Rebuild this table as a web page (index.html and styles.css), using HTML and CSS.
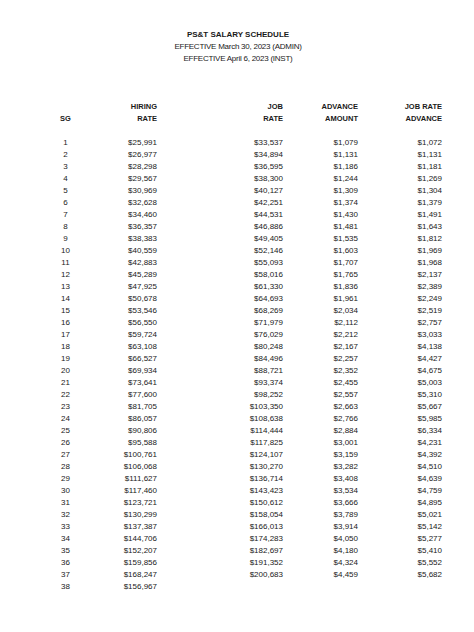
FILE: index.html
```html
<!DOCTYPE html>
<html>
<head>
<meta charset="utf-8">
<link rel="stylesheet" href="styles.css">
</head>
<body>
<div class="page">
  <div class="title">
    <div class="t1">PS&amp;T SALARY SCHEDULE</div>
    <div class="t2">EFFECTIVE March 30, 2023 (ADMIN)</div>
    <div class="t2">EFFECTIVE April 6, 2023 (INST)</div>
  </div>
  <div class="grid head">
    <div class="c1"></div><div class="r">HIRING</div><div class="r">JOB</div><div class="r">ADVANCE</div><div class="r">JOB RATE</div>
    <div class="c1">SG</div><div class="r">RATE</div><div class="r">RATE</div><div class="r">AMOUNT</div><div class="r">ADVANCE</div>
  </div>
  <div class="grid body" id="rows"></div>
</div>
<script>
var d=[
[1,"$25,991","$33,537","$1,079","$1,072"],
[2,"$26,977","$34,894","$1,131","$1,131"],
[3,"$28,298","$36,595","$1,186","$1,181"],
[4,"$29,567","$38,300","$1,244","$1,269"],
[5,"$30,969","$40,127","$1,309","$1,304"],
[6,"$32,628","$42,251","$1,374","$1,379"],
[7,"$34,460","$44,531","$1,430","$1,491"],
[8,"$36,357","$46,886","$1,481","$1,643"],
[9,"$38,383","$49,405","$1,535","$1,812"],
[10,"$40,559","$52,146","$1,603","$1,969"],
[11,"$42,883","$55,093","$1,707","$1,968"],
[12,"$45,289","$58,016","$1,765","$2,137"],
[13,"$47,925","$61,330","$1,836","$2,389"],
[14,"$50,678","$64,693","$1,961","$2,249"],
[15,"$53,546","$68,269","$2,034","$2,519"],
[16,"$56,550","$71,979","$2,112","$2,757"],
[17,"$59,724","$76,029","$2,212","$3,033"],
[18,"$63,108","$80,248","$2,167","$4,138"],
[19,"$66,527","$84,496","$2,257","$4,427"],
[20,"$69,934","$88,721","$2,352","$4,675"],
[21,"$73,641","$93,374","$2,455","$5,003"],
[22,"$77,600","$98,252","$2,557","$5,310"],
[23,"$81,705","$103,350","$2,663","$5,667"],
[24,"$86,057","$108,638","$2,766","$5,985"],
[25,"$90,806","$114,444","$2,884","$6,334"],
[26,"$95,588","$117,825","$3,001","$4,231"],
[27,"$100,761","$124,107","$3,159","$4,392"],
[28,"$106,068","$130,270","$3,282","$4,510"],
[29,"$111,627","$136,714","$3,408","$4,639"],
[30,"$117,460","$143,423","$3,534","$4,759"],
[31,"$123,721","$150,612","$3,666","$4,895"],
[32,"$130,299","$158,054","$3,789","$5,021"],
[33,"$137,387","$166,013","$3,914","$5,142"],
[34,"$144,706","$174,283","$4,050","$5,277"],
[35,"$152,207","$182,697","$4,180","$5,410"],
[36,"$159,856","$191,352","$4,324","$5,552"],
[37,"$168,247","$200,683","$4,459","$5,682"],
[38,"$156,967","","",""]
];
var h="";
d.forEach(function(r){
  h+='<div class="c1">'+r[0]+'</div>';
  for(var i=1;i<5;i++) h+='<div class="r">'+r[i]+'</div>';
});
document.getElementById("rows").innerHTML=h;
</script>
</body>
</html>
```
FILE: styles.css
```css
html, body {
  margin: 0;
  padding: 0;
  background: #ffffff;
}
body {
  font-family: "Liberation Sans", Arial, sans-serif;
  font-size: 8px;
  color: #1a1a1a;
}
.page {
  width: 474px;
  height: 632px;
  padding-top: 29px;
  box-sizing: border-box;
}
.title {
  text-align: center;
  line-height: 12px;
  padding-left: 2px;
}
.t1 {
  font-weight: bold;
}
.t2 {
  letter-spacing: -0.25px;
}
.grid {
  display: grid;
  grid-template-columns: 31px 76px 126px 75px 84px;
  margin-left: 50px;
  line-height: 12px;
}
.head {
  margin-top: 36px;
  font-weight: bold;
  font-size: 7.5px;
}
.body {
  margin-top: 12px;
}
.c1 {
  text-align: center;
}
.r {
  text-align: right;
  white-space: nowrap;
}
```
